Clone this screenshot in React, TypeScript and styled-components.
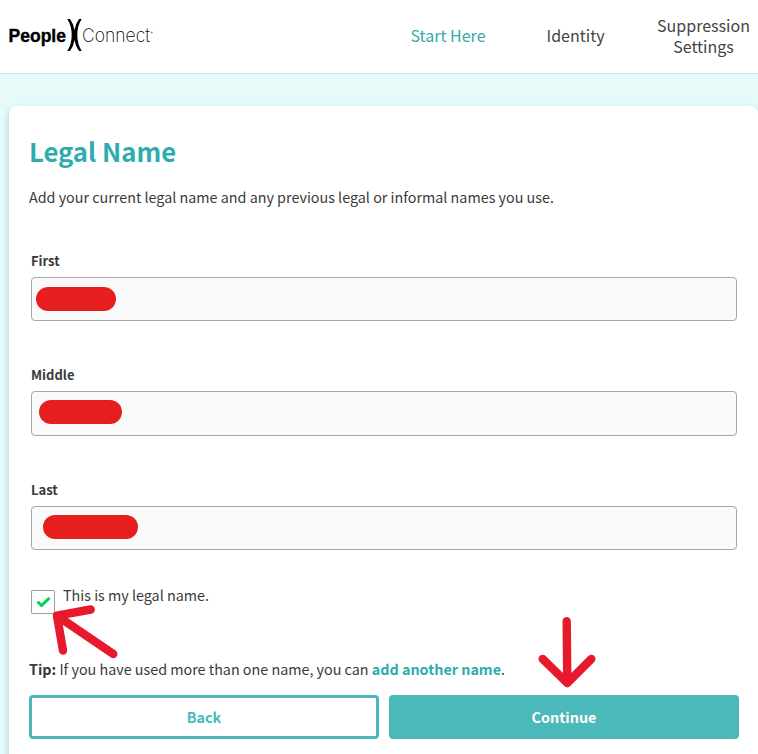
import React from "react";
import styled, { createGlobalStyle } from "styled-components";

const sans = `"Noto Sans CJK SC", "Noto Sans", sans-serif`;

const GlobalStyle = createGlobalStyle`
  * { box-sizing: border-box; }
  body { margin: 0; background: #e5faf9; overflow: hidden; color: #3a3a3a; font-family: ${sans}; }
`;

const Page = styled.div`
  width: 758px;
  height: 754px;
  overflow: hidden;
  display: flex;
  flex-direction: column;
`;

const Header = styled.header`
  height: 74px;
  flex: none;
  background: #fff;
  border-bottom: 1px solid #d3e3e2;
  display: flex;
  justify-content: space-between;
  padding-left: 8px;
`;

const Logo = styled.svg`
  width: 150px;
  height: 72px;
  display: block;
`;

const Nav = styled.nav`
  display: grid;
  grid-template-columns: 124px 131px 125px;
  align-items: center;
  margin-right: -8px;
  height: 71px;
`;

const NavLink = styled.a<{ $active?: boolean }>`
  font-size: 16px;
  line-height: 21px;
  text-align: center;
  color: ${(p) => (p.$active ? "#36a9aa" : "#444")};
`;

const Card = styled.main`
  width: 749px;
  height: 700px;
  flex: none;
  margin: 32px 0 0 9px;
  padding: 28px 19px 0 20px;
  background: #fff;
  border-radius: 8px;
  box-shadow: 0 3px 6px rgba(0, 60, 60, 0.26);
`;

const Title = styled.h1`
  margin: 0;
  font-size: 25.7px;
  line-height: 34px;
  font-weight: 700;
  color: #2eacad;
`;

const Text = styled.p`
  margin: 0;
  font-size: 14.33px;
  line-height: 22px;
`;

const Intro = styled(Text)`
  margin-top: 18px;
`;

const Fields = styled.div`
  display: flex;
  flex-direction: column;
  gap: 43px;
  margin: 42px 2px 0;
`;

const Field = styled.label<{ $boxHeight: number }>`
  display: grid;
  grid-template-rows: 27px ${(p) => p.$boxHeight}px;
`;

const FieldLabel = styled.span`
  font-size: 13px;
  line-height: 22px;
  font-weight: 700;
`;

const FieldBox = styled.span`
  display: block;
  border: 1px solid #a6a6a6;
  border-radius: 4px;
  background: #fafafa;
`;

const Redaction = styled.span<{ $left: number; $top: number; $width: number }>`
  display: block;
  height: 24px;
  width: ${(p) => p.$width}px;
  margin: ${(p) => p.$top}px 0 0 ${(p) => p.$left}px;
  border-radius: 12px;
  background: #e61e1e;
`;

const CheckRow = styled.div`
  display: flex;
  gap: 8px;
  margin: 34px 2px 0;
  height: 30px;
`;

const CheckBox = styled.span`
  position: relative;
  width: 24px;
  height: 24px;
  margin-top: 6px;
  border: 1px solid #a0a0a0;
  border-radius: 1px;
`;

const Tick = styled.svg`
  display: block;
  margin: 5px 0 0 3.5px;
`;

const Tip = styled(Text)`
  margin-top: 44px;
`;

const Link = styled.a`
  font-weight: 700;
  color: #2eacad;
`;

const Actions = styled.div`
  display: grid;
  grid-template-columns: 1fr 1fr;
  gap: 10px;
  margin-top: 15px;
`;

const Button = styled.button<{ $primary?: boolean }>`
  position: relative;
  height: 44px;
  padding: 0;
  border: 3px solid #4bb8b9;
  border-radius: 4px;
  background: ${(p) => (p.$primary ? "#4bb8b9" : "#fff")};
  color: ${(p) => (p.$primary ? "#fff" : "#4bb8b9")};
  font: 700 14.4px/22px ${sans};
`;

const Arrow = styled.svg<{ $left: number; $top: number }>`
  position: absolute;
  left: ${(p) => p.$left}px;
  top: ${(p) => p.$top}px;
  overflow: visible;
  fill: none;
  stroke: #e6192d;
  stroke-width: 8.4;
  stroke-linecap: round;
  stroke-linejoin: round;
`;

const names = [
  { label: "First", left: 4, top: 9, width: 80, boxHeight: 44 },
  { label: "Middle", left: 7, top: 8, width: 82.5, boxHeight: 45 },
  { label: "Last", left: 11, top: 8, width: 94.5, boxHeight: 44 },
];

export default function App() {
  return (
    <Page>
      <GlobalStyle />
      <Header>
        <Logo viewBox="8 0 150 72" aria-label="PeopleConnect">
          <text x="8.500" y="41.500" fontFamily="Liberation Sans, sans-serif" fontWeight="700" fontSize="19" textLength="57.500" lengthAdjust="spacingAndGlyphs" stroke="#000" strokeWidth="0.4">People</text>
          <path d="M67.300 19H70Q73.700 24 74.500 30Q75.300 24 79 19H81.700Q77.300 26 77.300 35Q77.300 44 81.700 51H79Q75.300 46 74.500 40Q73.700 46 70 51H67.300Q71.700 44 71.700 35Q71.700 26 67.300 19Z" />
          <text x="82" y="41.500" fontFamily="Inter, sans-serif" fontWeight="200" fontSize="18.500" textLength="68" lengthAdjust="spacingAndGlyphs">Connect</text>
          <circle cx="151.800" cy="32.500" r="0.9" fill="#888" />
        </Logo>
        <Nav>
          <NavLink $active>Start Here</NavLink>
          <NavLink>Identity</NavLink>
          <NavLink>Suppression Settings</NavLink>
        </Nav>
      </Header>
      <Card>
        <Title>Legal Name</Title>
        <Intro>Add your current legal name and any previous legal or informal names you use.</Intro>
        <Fields>
          {names.map((n) => (
            <Field key={n.label} $boxHeight={n.boxHeight}>
              <FieldLabel>{n.label}</FieldLabel>
              <FieldBox>
                <Redaction $left={n.left} $top={n.top} $width={n.width} />
              </FieldBox>
            </Field>
          ))}
        </Fields>
        <CheckRow>
          <CheckBox>
            <Tick width="15" height="12" viewBox="0 0 15 12">
              <path d="M1.500 5.500 5.500 9.500 13.500 1.800" fill="none" stroke="#00d455" strokeWidth="3" />
            </Tick>
            <Arrow $left={20} $top={14} width="66" height="56">
              <path d="M61.300 49 5 10.700M38.700 4.500 5 10.700 11 45.500" />
            </Arrow>
          </CheckBox>
          <Text>This is my legal name.</Text>
        </CheckRow>
        <Tip>
          <b>Tip:</b> If you have used more than one name, you can <Link>add another name</Link>.
        </Tip>
        <Actions>
          <Button>Back</Button>
          <Button $primary>
            Continue
            <Arrow $left={146} $top={-81} width="60" height="72">
              <path d="M28.700 4.300 29.300 66M4.700 42 29.300 66 53.300 42" />
            </Arrow>
          </Button>
        </Actions>
      </Card>
    </Page>
  );
}
